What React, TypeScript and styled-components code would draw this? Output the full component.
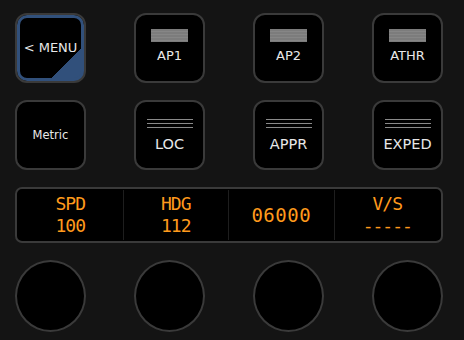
import React from "react";
import styled, {createGlobalStyle, css} from "styled-components";

const GlobalStyle = createGlobalStyle`
  html, body {
    margin: 0;
    padding: 0;
    background: #141414;
  }
`

const Panel = styled.div`
  width: 464px;
  height: 340px;
  box-sizing: border-box;
  padding: 13px 21px 0 15px;
  display: flex;
  flex-direction: column;
  gap: 17px;
  background: #141414;
  font-family: "DejaVu Sans", "Liberation Sans", sans-serif;
`

const Row = styled.div`
  display: grid;
  grid-template-columns: repeat(4, 71px);
  column-gap: 48px;
`

const Key = styled.div<{ $menu?: boolean; $top?: number }>`
  width: 71px;
  height: 70px;
  box-sizing: border-box;
  border: 2px solid #3a3a3a;
  border-radius: 12px;
  background: #000;
  display: flex;
  flex-direction: column;
  align-items: center;
  justify-content: ${p => p.$top !== undefined ? "flex-start" : "center"};
  padding-top: ${p => p.$top ?? 0}px;
  color: #e8e8e8;
  overflow: hidden;

  ${p => p.$menu && css`
    background: linear-gradient(135deg, #000 73%, #31507b 73%);
    box-shadow: inset 0 0 0 3px #31507b;
  `}
`

const Label = styled.div<{ $size: number; $gap?: number }>`
  font-size: ${p => p.$size}px;
  line-height: 16px;
  margin-top: ${p => p.$gap ?? 0}px;
  white-space: nowrap;
`

const LampBar = styled.div`
  width: 37px;
  height: 13px;
  background: repeating-linear-gradient(180deg, #7c7c7c 0, #7c7c7c 2px, #868686 2px, #868686 3px);
`

const LampLines = styled.div`
  width: 46px;
  display: flex;
  flex-direction: column;
  gap: 3px;

  span {
    display: block;
    height: 1px;
    background: #8a8a8a;
  }
`

const Display = styled.div`
  height: 56px;
  box-sizing: border-box;
  border: 2px solid #3a3a3a;
  border-radius: 7px;
  background: #000;
  display: grid;
  grid-template-columns: repeat(4, 1fr);
  padding: 1px;
`

const Cell = styled.div`
  display: flex;
  flex-direction: column;
  align-items: center;
  justify-content: center;
  border-right: 1px solid #1e1e1e;
  color: #ff9a1c;
  font-family: "DejaVu Sans Mono", "Liberation Mono", monospace;
  font-size: 18px;
  letter-spacing: -1px;
  line-height: 22px;

  &:last-child {
    border-right: none;
  }
`

const BigReadout = styled.div`
  font-size: 19px;
  letter-spacing: 0.5px;
`

const Knob = styled.div`
  width: 71px;
  height: 72px;
  box-sizing: border-box;
  border: 2px solid #3a3a3a;
  border-radius: 50%;
  background: #000;
`

const IndicatorKey = ({label, kind}: { label: string; kind: "bar" | "lines" }) => (
    kind === "bar" ? (
        <Key $top={14}>
            <LampBar/>
            <Label $size={13} $gap={6}>{label}</Label>
        </Key>
    ) : (
        <Key $top={17}>
            <LampLines><span/><span/><span/></LampLines>
            <Label $size={14.5} $gap={8}>{label}</Label>
        </Key>
    )
)

const App = () => {
    return (
        <Panel>
            <GlobalStyle/>
            <Row>
                <Key $menu><Label $size={13}>&lt; MENU</Label></Key>
                <IndicatorKey label="AP1" kind="bar"/>
                <IndicatorKey label="AP2" kind="bar"/>
                <IndicatorKey label="ATHR" kind="bar"/>
            </Row>
            <Row>
                <Key><Label $size={11.5}>Metric</Label></Key>
                <IndicatorKey label="LOC" kind="lines"/>
                <IndicatorKey label="APPR" kind="lines"/>
                <IndicatorKey label="EXPED" kind="lines"/>
            </Row>
            <Display>
                <Cell><div>SPD</div><div>100</div></Cell>
                <Cell><div>HDG</div><div>112</div></Cell>
                <Cell><BigReadout>06000</BigReadout></Cell>
                <Cell><div>V/S</div><div>-----</div></Cell>
            </Display>
            <Row>
                <Knob/>
                <Knob/>
                <Knob/>
                <Knob/>
            </Row>
        </Panel>
    );
}

export default App;
